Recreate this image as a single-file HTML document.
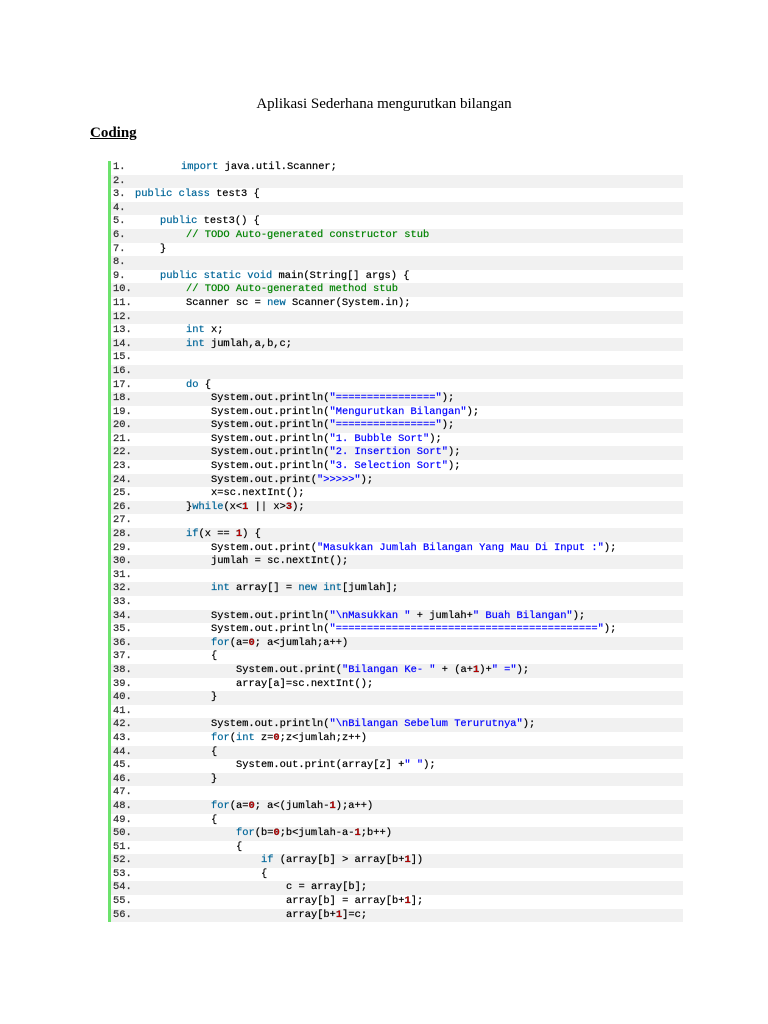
<!DOCTYPE html>
<html><head><meta charset="utf-8"><style>
body{margin:0;width:768px;height:1024px;background:#fff;position:relative;overflow:hidden}
.t{position:absolute;top:96px;left:0;width:768px;text-align:center;font:15px "Liberation Serif",serif;color:#000}
.c{position:absolute;top:125px;left:90px;font:bold 15px "Liberation Serif",serif;text-decoration:underline}
.blk{position:absolute;left:108px;top:161px;width:572px;border-left:3px solid #6ce26c}
.r{position:relative;height:13.6px;font:10.4px/13.6px "Liberation Mono",monospace;color:#000;white-space:pre;-webkit-text-stroke:0.2px #000}
.r:nth-child(even){background:#f1f1f1}
.n{position:absolute;left:2px;color:#444}
.x{position:absolute}
.k{color:#069;-webkit-text-stroke:0.2px #069}.s{color:#00f;-webkit-text-stroke:0.2px #00f}.m{color:#008200;-webkit-text-stroke:0.2px #008200}.d{color:#c00;font-weight:bold}
</style></head><body>
<div class="t">Aplikasi Sederhana mengurutkan bilangan</div>
<div class="c">Coding</div>
<div class="blk">
<div class="r"><span class="n">1.</span><span class="x" style="left:70px"><span class="k">import</span> java.util.Scanner;</span></div>
<div class="r"><span class="n">2.</span></div>
<div class="r"><span class="n">3.</span><span class="x" style="left:24px"><span class="k">public class</span> test3 {</span></div>
<div class="r"><span class="n">4.</span></div>
<div class="r"><span class="n">5.</span><span class="x" style="left:49px"><span class="k">public</span> test3() {</span></div>
<div class="r"><span class="n">6.</span><span class="x" style="left:75px"><span class="m">// TODO Auto-generated constructor stub</span></span></div>
<div class="r"><span class="n">7.</span><span class="x" style="left:49px">}</span></div>
<div class="r"><span class="n">8.</span></div>
<div class="r"><span class="n">9.</span><span class="x" style="left:49px"><span class="k">public static void</span> main(String[] args) {</span></div>
<div class="r"><span class="n">10.</span><span class="x" style="left:75px"><span class="m">// TODO Auto-generated method stub</span></span></div>
<div class="r"><span class="n">11.</span><span class="x" style="left:75px">Scanner sc = <span class="k">new</span> Scanner(System.in);</span></div>
<div class="r"><span class="n">12.</span></div>
<div class="r"><span class="n">13.</span><span class="x" style="left:75px"><span class="k">int</span> x;</span></div>
<div class="r"><span class="n">14.</span><span class="x" style="left:75px"><span class="k">int</span> jumlah,a,b,c;</span></div>
<div class="r"><span class="n">15.</span></div>
<div class="r"><span class="n">16.</span></div>
<div class="r"><span class="n">17.</span><span class="x" style="left:75px"><span class="k">do</span> {</span></div>
<div class="r"><span class="n">18.</span><span class="x" style="left:100px">System.out.println(<span class="s">"================"</span>);</span></div>
<div class="r"><span class="n">19.</span><span class="x" style="left:100px">System.out.println(<span class="s">"Mengurutkan Bilangan"</span>);</span></div>
<div class="r"><span class="n">20.</span><span class="x" style="left:100px">System.out.println(<span class="s">"================"</span>);</span></div>
<div class="r"><span class="n">21.</span><span class="x" style="left:100px">System.out.println(<span class="s">"1. Bubble Sort"</span>);</span></div>
<div class="r"><span class="n">22.</span><span class="x" style="left:100px">System.out.println(<span class="s">"2. Insertion Sort"</span>);</span></div>
<div class="r"><span class="n">23.</span><span class="x" style="left:100px">System.out.println(<span class="s">"3. Selection Sort"</span>);</span></div>
<div class="r"><span class="n">24.</span><span class="x" style="left:100px">System.out.print(<span class="s">"&gt;&gt;&gt;&gt;&gt;"</span>);</span></div>
<div class="r"><span class="n">25.</span><span class="x" style="left:100px">x=sc.nextInt();</span></div>
<div class="r"><span class="n">26.</span><span class="x" style="left:75px">}<span class="k">while</span>(x&lt;<span class="d">1</span> || x&gt;<span class="d">3</span>);</span></div>
<div class="r"><span class="n">27.</span></div>
<div class="r"><span class="n">28.</span><span class="x" style="left:75px"><span class="k">if</span>(x == <span class="d">1</span>) {</span></div>
<div class="r"><span class="n">29.</span><span class="x" style="left:100px">System.out.print(<span class="s">"Masukkan Jumlah Bilangan Yang Mau Di Input :"</span>);</span></div>
<div class="r"><span class="n">30.</span><span class="x" style="left:100px">jumlah = sc.nextInt();</span></div>
<div class="r"><span class="n">31.</span></div>
<div class="r"><span class="n">32.</span><span class="x" style="left:100px"><span class="k">int</span> array[] = <span class="k">new int</span>[jumlah];</span></div>
<div class="r"><span class="n">33.</span></div>
<div class="r"><span class="n">34.</span><span class="x" style="left:100px">System.out.println(<span class="s">"\nMasukkan "</span> + jumlah+<span class="s">" Buah Bilangan"</span>);</span></div>
<div class="r"><span class="n">35.</span><span class="x" style="left:100px">System.out.println(<span class="s">"=========================================="</span>);</span></div>
<div class="r"><span class="n">36.</span><span class="x" style="left:100px"><span class="k">for</span>(a=<span class="d">0</span>; a&lt;jumlah;a++)</span></div>
<div class="r"><span class="n">37.</span><span class="x" style="left:100px">{</span></div>
<div class="r"><span class="n">38.</span><span class="x" style="left:125px">System.out.print(<span class="s">"Bilangan Ke- "</span> + (a+<span class="d">1</span>)+<span class="s">" ="</span>);</span></div>
<div class="r"><span class="n">39.</span><span class="x" style="left:125px">array[a]=sc.nextInt();</span></div>
<div class="r"><span class="n">40.</span><span class="x" style="left:100px">}</span></div>
<div class="r"><span class="n">41.</span></div>
<div class="r"><span class="n">42.</span><span class="x" style="left:100px">System.out.println(<span class="s">"\nBilangan Sebelum Terurutnya"</span>);</span></div>
<div class="r"><span class="n">43.</span><span class="x" style="left:100px"><span class="k">for</span>(<span class="k">int</span> z=<span class="d">0</span>;z&lt;jumlah;z++)</span></div>
<div class="r"><span class="n">44.</span><span class="x" style="left:100px">{</span></div>
<div class="r"><span class="n">45.</span><span class="x" style="left:125px">System.out.print(array[z] +<span class="s">" "</span>);</span></div>
<div class="r"><span class="n">46.</span><span class="x" style="left:100px">}</span></div>
<div class="r"><span class="n">47.</span></div>
<div class="r"><span class="n">48.</span><span class="x" style="left:100px"><span class="k">for</span>(a=<span class="d">0</span>; a&lt;(jumlah-<span class="d">1</span>);a++)</span></div>
<div class="r"><span class="n">49.</span><span class="x" style="left:100px">{</span></div>
<div class="r"><span class="n">50.</span><span class="x" style="left:125px"><span class="k">for</span>(b=<span class="d">0</span>;b&lt;jumlah-a-<span class="d">1</span>;b++)</span></div>
<div class="r"><span class="n">51.</span><span class="x" style="left:125px">{</span></div>
<div class="r"><span class="n">52.</span><span class="x" style="left:150px"><span class="k">if</span> (array[b] &gt; array[b+<span class="d">1</span>])</span></div>
<div class="r"><span class="n">53.</span><span class="x" style="left:150px">{</span></div>
<div class="r"><span class="n">54.</span><span class="x" style="left:175px">c = array[b];</span></div>
<div class="r"><span class="n">55.</span><span class="x" style="left:175px">array[b] = array[b+<span class="d">1</span>];</span></div>
<div class="r"><span class="n">56.</span><span class="x" style="left:175px">array[b+<span class="d">1</span>]=c;</span></div>
</div>
</body></html>
